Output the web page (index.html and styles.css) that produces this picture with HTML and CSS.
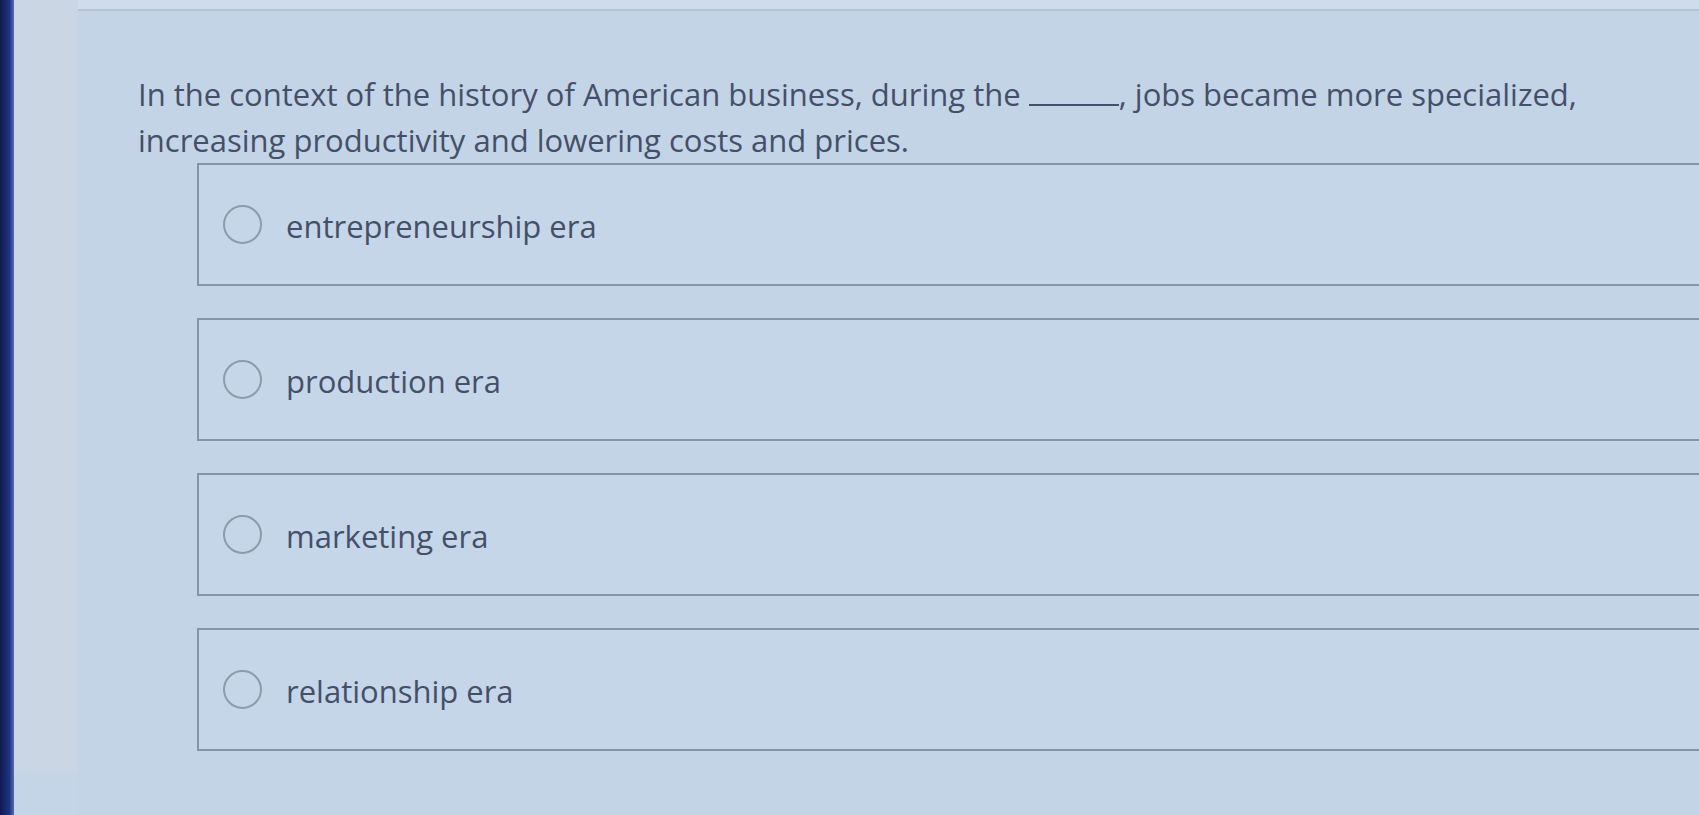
FILE: index.html
```html
<!DOCTYPE html>
<html lang="en">
<head>
    <meta charset="UTF-8">
    <meta name="viewport" content="width=device-width, initial-scale=1.0">
    <title>Question</title>
    <link rel="stylesheet" href="styles.css">
</head>
<body>
    <div class="edge"></div>
    <div class="rail"></div>
    <div class="main">
        <div class="topbar"></div>
        <div class="question">
            <p class="prompt">In the context of the history of American business, during the <span class="blank"></span>, jobs became more specialized, increasing productivity and lowering costs and prices.</p>

            <label class="option">
                <span class="radio"></span>
                <span class="option-text">entrepreneurship era</span>
            </label>
            <label class="option">
                <span class="radio"></span>
                <span class="option-text">production era</span>
            </label>
            <label class="option">
                <span class="radio"></span>
                <span class="option-text">marketing era</span>
            </label>
            <label class="option">
                <span class="radio"></span>
                <span class="option-text">relationship era</span>
            </label>
        </div>
    </div>
</body>
</html>
```

FILE: styles.css
```css
html, body {
    height: 100%;
}
body {
    margin: 0;
    display: flex;
    overflow: hidden;
    font-family: "Open Sans", "Noto Sans", sans-serif;
    background-color: #c4d5e7;
    color: #44506a;
}
.edge {
    width: 14px;
    flex-shrink: 0;
    background: linear-gradient(to right, #121a52, #1f3586 70%, #5a6fa8);
}
.rail {
    width: 64px;
    height: 773px;
    flex-shrink: 0;
    background-color: #cad6e3;
}
.main {
    flex: 1;
    min-width: 0;
    background-color: #c3d4e6;
}
.topbar {
    height: 9px;
    background-color: #cfdcea;
    border-bottom: 2px solid #b3c3d5;
}
.question {
    padding-left: 60px;
}
.prompt {
    margin: 60px 0 0;
    font-size: 31px;
    line-height: 46px;
}
.blank {
    display: inline-block;
    width: 90px;
    border-bottom: 2px solid #44506a;
}
.option {
    display: flex;
    align-items: center;
    width: 1600px;
    height: 119px;
    margin: 0 0 32px 59px;
    border: 2px solid #8495aa;
    background-color: #c5d6e8;
}
.radio {
    width: 35px;
    height: 35px;
    margin-left: 24px;
    margin-right: 24px;
    border: 2px solid #8d9bab;
    border-radius: 50%;
    flex-shrink: 0;
}
.option-text {
    font-size: 31px;
    margin-top: 2px;
}
```
